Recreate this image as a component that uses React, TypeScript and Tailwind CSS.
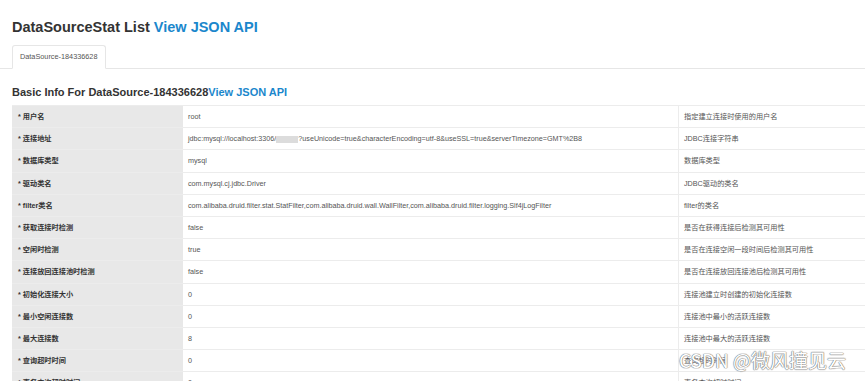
const rows: [string, React.ReactNode, string][] = [
  ["* 用户名", "root", "指定建立连接时使用的用户名"],
  [
    "* 连接地址",
    <>
      jdbc:mysql://localhost:3306/
      <span className="inline-block w-[22px] h-[7px] bg-[#dcdcdc] align-middle" />
      ?useUnicode=true&amp;characterEncoding=utf-8&amp;useSSL=true&amp;serverTimezone=GMT%2B8
    </>,
    "JDBC连接字符串",
  ],
  ["* 数据库类型", "mysql", "数据库类型"],
  ["* 驱动类名", "com.mysql.cj.jdbc.Driver", "JDBC驱动的类名"],
  [
    "* filter类名",
    "com.alibaba.druid.filter.stat.StatFilter,com.alibaba.druid.wall.WallFilter,com.alibaba.druid.filter.logging.Slf4jLogFilter",
    "filter的类名",
  ],
  ["* 获取连接时检测", "false", "是否在获得连接后检测其可用性"],
  ["* 空闲时检测", "true", "是否在连接空闲一段时间后检测其可用性"],
  ["* 连接放回连接池时检测", "false", "是否在连接放回连接池后检测其可用性"],
  ["* 初始化连接大小", "0", "连接池建立时创建的初始化连接数"],
  ["* 最小空闲连接数", "0", "连接池中最小的活跃连接数"],
  ["* 最大连接数", "8", "连接池中最大的活跃连接数"],
  ["* 查询超时时间", "0", "查询超时时间"],
  ["* 事务查询超时时间", "0", "事务查询超时时间"],
];

export default function App() {
  return (
    <div
      className="relative w-[865px] h-[381px] overflow-hidden bg-white text-[#333]"
      style={{ fontFamily: '"Liberation Sans", Arial, "Noto Sans CJK SC", sans-serif' }}
    >
      {/* Page title */}
      <h1 className="pt-[18px] pl-[12px] text-[14.5px] font-bold leading-[18px]">
        DataSourceStat List <span className="text-[#1b87cc]">View JSON API</span>
      </h1>

      {/* Tabs */}
      <div className="mt-[9px] flex border-b border-[#e6e6e6] pl-[12px]">
        <div className="-mb-px h-[24px] rounded-t-[3px] border border-b-white border-[#e6e6e6] bg-white px-[7px] text-[7.3px] leading-[22px] text-[#555]">
          DataSource-184336628
        </div>
      </div>

      {/* Section heading */}
      <h3 className="mt-[16px] pl-[12px] text-[11px] font-bold leading-[15px]">
        Basic Info For DataSource-184336628<span className="text-[#1b87cc]">View JSON API</span>
      </h3>

      {/* Table */}
      <div className="mt-[5px] ml-[12px] w-[860px] border-t border-[#ececec]">
        {rows.map(([label, value, desc], i) => (
          <div key={i} className="flex h-[22.2px] border-b border-[#ececec] text-[7.2px] leading-[21px]">
            <div className="w-[171px] shrink-0 bg-[#e8e8e8] pl-[6px] text-[#333] font-bold whitespace-nowrap">
              {label}
            </div>
            <div className="w-[496px] shrink-0 pl-[5px] text-[#555] whitespace-nowrap border-r border-[#ececec]">
              {value}
            </div>
            <div className="flex-1 pl-[5px] text-[#555] whitespace-nowrap">{desc}</div>
          </div>
        ))}
      </div>

      {/* Watermark */}
      <div
        className="absolute left-[679px] top-[348px] text-[19px] leading-[24px] text-white"
        style={{
          fontFamily: '"Noto Sans CJK SC", "Liberation Sans", sans-serif',
          textShadow: "0 0 1px #777, 0 0 1px #777, 0 0 1px #777",
        }}
      >
        CSDN @微风撞见云
      </div>
    </div>
  );
}
